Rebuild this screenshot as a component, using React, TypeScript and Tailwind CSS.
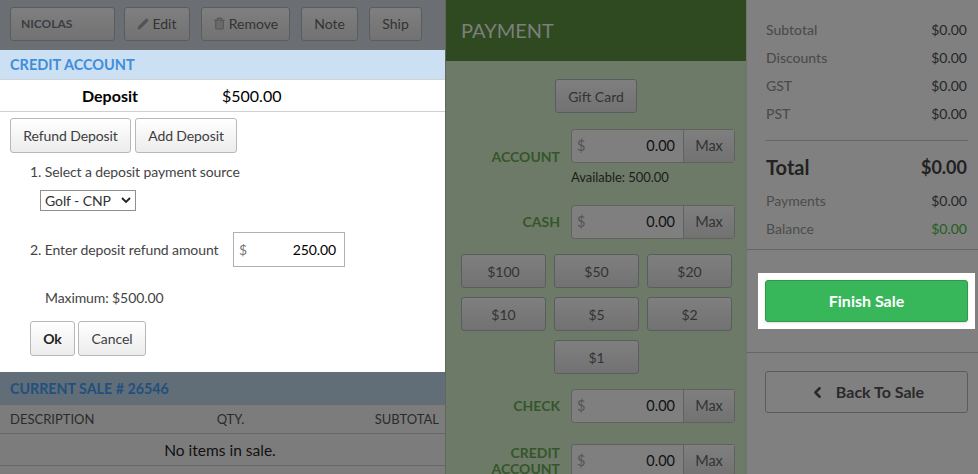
import React from 'react'
import { Pencil, Trash, ChevronLeft } from 'lucide-react'

const dimBtn =
  'h-[34px] shrink-0 flex items-center justify-center rounded-[3px] border border-[#5a5d60] bg-gradient-to-b from-[#7f7f7f] to-[#727272] text-[14px] text-[#333]'
const lightBtn =
  'h-[35px] flex items-center justify-center rounded-[3px] border border-[#b8b8b8] bg-gradient-to-b from-white to-[#ececec] text-[14px] tracking-[-0.1px] text-[#3d3d3d]'

const summaryRows = [
  { label: 'Subtotal', value: '$0.00' },
  { label: 'Discounts', value: '$0.00' },
  { label: 'GST', value: '$0.00' },
  { label: 'PST', value: '$0.00' }
]

const AmountRow = ({
  label,
  className = '',
  labelClass = ''
}: {
  label: React.ReactNode
  className?: string
  labelClass?: string
}) => (
  <div className={`flex shrink-0 items-center ${className}`}>
    <div className={`w-[114px] text-right text-[14px] font-bold leading-[16px] text-[#35562a] ${labelClass}`}>{label}</div>
    <div className="ml-[11px] flex h-[34px] w-[164px] shrink-0 rounded-[3px] border border-[#5f625e] bg-[#7f7f7f] text-[14.5px]">
      <div className="flex w-[112px] items-center justify-between border-r border-[#5f625e] pl-[5px] pr-[8px]">
        <span className="text-[#555]">$</span>
        <span className="text-[#111]">0.00</span>
      </div>
      <div className="flex flex-1 items-center justify-center bg-gradient-to-b from-[#7f7f7f] to-[#727272] text-[#333]">
        Max
      </div>
    </div>
  </div>
)

const QuickCash = ({ amount }: { amount: string }) => (
  <div className={`${dimBtn} w-[85px]`}>{amount}</div>
)

export default function App() {
  return (
    <div className="flex h-[474px] w-[978px] overflow-hidden bg-[#808080] font-['Lato','Liberation_Sans',sans-serif]">
      {/* sale column */}
      <div className="flex w-[445px] shrink-0 flex-col bg-[#7c7c7c]">
        <div className="flex h-[50px] items-center gap-[9px] bg-[#6b6f74] pb-[3px] pl-[10px]">
          <div className={`${dimBtn} w-[105px] justify-start pl-[10px] !text-[12px] font-bold !text-[#3a3d41]`}>NICOLAS</div>
          <div className={`${dimBtn} w-[66px] gap-[3px]`}>
            <Pencil size={12} fill="#555" stroke="#555" />
            Edit
          </div>
          <div className={`${dimBtn} ml-[2px] w-[89px] gap-[3px]`}>
            <Trash size={13} stroke="#555" fill="#6a6a6a" />
            Remove
          </div>
          <div className={`${dimBtn} ml-[2px] w-[57px]`}>Note</div>
          <div className={`${dimBtn} ml-[2px] w-[53px]`}>Ship</div>
        </div>

        {/* credit account panel */}
        <div className="flex h-[322px] flex-col bg-white">
          <div className="flex h-[30px] items-center border-b border-[#cfd3d6] bg-[#cbe0f2] pl-[10px] text-[14.5px] font-bold text-[#3f8ddb]">
            CREDIT ACCOUNT
          </div>
          <div className="flex h-[32px] items-center border-b border-[#cfcfcf] text-[16px] text-black">
            <span className="ml-[82px] w-[140px] font-bold">Deposit</span>
            <span>$500.00</span>
          </div>
          <div className="mt-[6px] flex gap-[4px] pl-[10px]">
            <div className={`${lightBtn} w-[121px]`}>Refund Deposit</div>
            <div className={`${lightBtn} w-[102px]`}>Add Deposit</div>
          </div>
          <div className="mt-[9px] pl-[30px] text-[14px] leading-[20px] tracking-[-0.1px] text-[#444]">1. Select a deposit payment source</div>
          <div className="ml-[40px] mt-[8px] flex h-[21px] w-[96px] items-center justify-between border border-[#8f8f8f] pl-[4px] pr-[4px] text-[14px] tracking-[-0.1px] text-[#333]">
            Golf - CNP
            <svg width="10" height="7" viewBox="0 0 10 7" fill="none" stroke="#222" strokeWidth="1.8">
              <path d="M1 1l4 4 4-4" />
            </svg>
          </div>
          <div className="mt-[21px] flex items-center pl-[30px] text-[14px] tracking-[-0.1px] text-[#444]">
            <span className="w-[203px]">2. Enter deposit refund amount</span>
            <div className="flex h-[35px] w-[112px] items-center justify-between border border-[#b0b0b0] pl-[5px] pr-[8px]">
              <span className="text-[#777]">$</span>
              <span className="text-black">250.00</span>
            </div>
          </div>
          <div className="mt-[21px] pl-[45px] text-[14px] leading-[20px] tracking-[-0.1px] text-[#444]">Maximum: $500.00</div>
          <div className="mt-[13px] flex gap-[3px] pl-[30px]">
            <div className={`${lightBtn} w-[45px] font-bold !text-[#222]`}>Ok</div>
            <div className={`${lightBtn} w-[68px]`}>Cancel</div>
          </div>
        </div>

        {/* current sale */}
        <div className="flex h-[33px] items-center border-b border-[#6a6a6a] bg-[#616d77] pl-[10px] pt-[2px] text-[14.25px] font-bold text-[#21507f]">
          CURRENT SALE # 26546
        </div>
        <div className="flex h-[29px] items-center justify-between border-b border-[#686868] pl-[10px] pr-[6px] pt-[1px] text-[13px] text-[#2b2b2b]">
          <span>DESCRIPTION</span>
          <span className="mr-[8px]">QTY.</span>
          <span>SUBTOTAL</span>
        </div>
        <div className="flex h-[32px] items-center justify-center border-b border-[#686868] pr-[5px] pt-[2px] text-[15.5px] text-[#111]">
          No items in sale.
        </div>
      </div>

      <div className="w-px shrink-0 bg-[#62665f]" />

      {/* payment column */}
      <div className="flex w-[300px] shrink-0 flex-col bg-[#6e7a68]">
        <div className="flex h-[61px] shrink-0 items-center bg-[#2f4a20] pb-[2px] pl-[15px] text-[20px] text-[#7c7f7b]">PAYMENT</div>
        <div className={`${dimBtn} mx-auto mt-[18px] w-[82px]`}>Gift Card</div>
        <AmountRow label="ACCOUNT" className="mt-[16px]" labelClass="translate-y-[11px]" />
        <div className="mb-[19px] ml-[125px] mt-[5px] shrink-0 text-[13px] leading-[18px] tracking-[-0.05px] text-[#1c1c1c]">Available: 500.00</div>
        <AmountRow label="CASH" />
        <div className="mt-[15px] grid shrink-0 grid-cols-[85px_85px_85px] justify-center gap-x-[8px] gap-y-[9px] pl-[1px]">
          <QuickCash amount="$100" />
          <QuickCash amount="$50" />
          <QuickCash amount="$20" />
          <QuickCash amount="$10" />
          <QuickCash amount="$5" />
          <QuickCash amount="$2" />
          <div className="col-start-2">
            <QuickCash amount="$1" />
          </div>
        </div>
        <AmountRow label="CHECK" className="mt-[15px]" />
        <AmountRow
          label={
            <>
              CREDIT
              <br />
              ACCOUNT
            </>
          }
          className="mt-[21px]"
        />
      </div>

      <div className="w-px shrink-0 bg-[#6f736c]" />

      {/* totals column */}
      <div className="flex min-w-0 flex-1 flex-col bg-[#808080]">
        <div className="ml-[18px] mr-[10px] border-b border-[#666] px-[1px] pb-[13px] pt-[15px]">
          {summaryRows.map(row => (
            <div key={row.label} className="flex h-[28px] items-center justify-between text-[14px]">
              <span className="font-medium text-[#4c4c4c]">{row.label}</span>
              <span className="text-[#262626]">{row.value}</span>
            </div>
          ))}
        </div>
        <div className="border-b border-[#666] pb-[7px] pl-[19px] pr-[11px]">
          <div className="flex h-[52px] items-center justify-between font-bold text-[#222]">
            <span className="text-[20px]">Total</span>
            <span className="text-[18px]">$0.00</span>
          </div>
          <div className="-mt-[7px] flex h-[28px] items-center justify-between text-[14px]">
            <span className="text-[#4c4c4c]">Payments</span>
            <span className="text-[#262626]">$0.00</span>
          </div>
          <div className="flex h-[28px] items-center justify-between text-[14px]">
            <span className="text-[#4c4c4c]">Balance</span>
            <span className="text-[#1f5f1f]">$0.00</span>
          </div>
        </div>
        <div className="border-b border-[#666] pb-[23px] pl-[11px] pr-[3px] pt-[23px]">
          <div className="bg-white p-[7px]">
            <div className="flex h-[42px] items-center justify-center rounded-[3px] border border-[#2d9a4b] bg-[#37b65a] text-[16px] font-bold text-white shadow-sm">
              Finish Sale
            </div>
          </div>
        </div>
        <div className="pl-[18px] pr-[10px] pt-[18px]">
          <div className="flex h-[42px] items-center justify-center gap-[10px] rounded-[3px] border border-[#5c5c5c] text-[16px] font-bold text-[#2a2a2a]">
            <ChevronLeft size={17} strokeWidth={3.5} />
            Back To Sale
          </div>
        </div>
      </div>
    </div>
  )
}
